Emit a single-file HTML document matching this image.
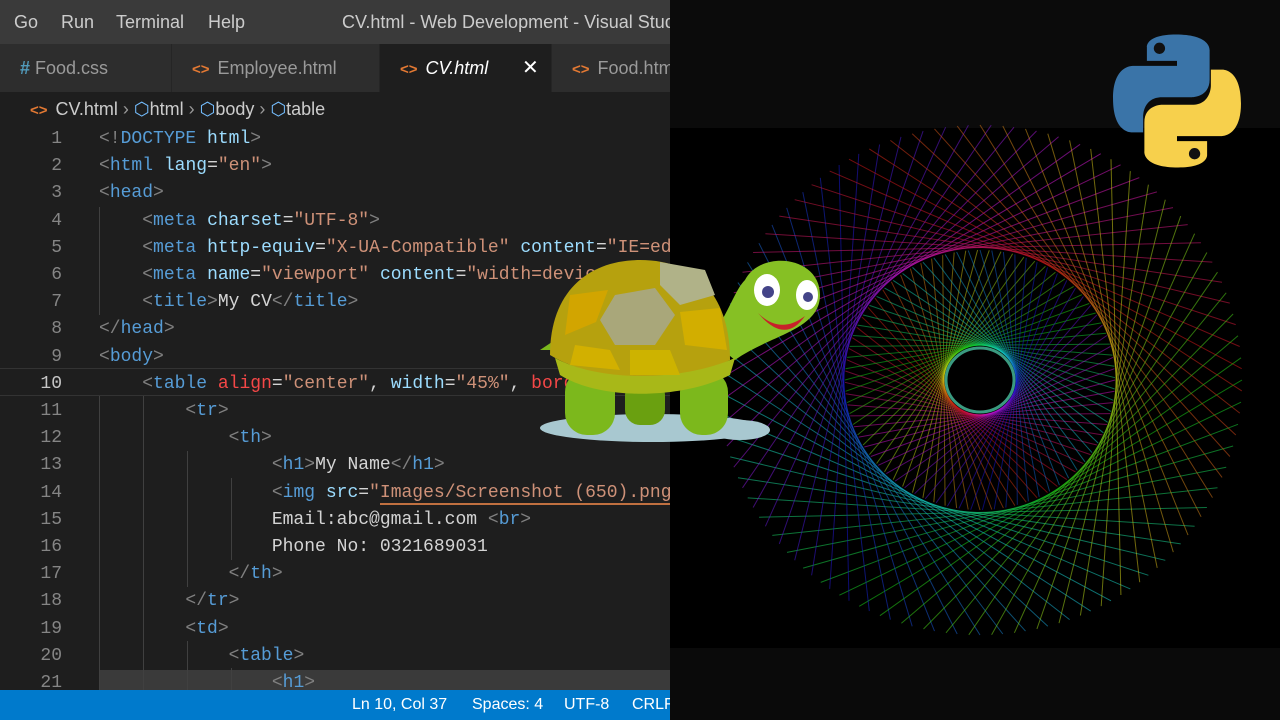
<!DOCTYPE html>
<html><head><meta charset="utf-8"><style>
*{margin:0;padding:0;box-sizing:border-box}
body{width:1280px;height:720px;overflow:hidden;background:#000;position:relative;font-family:"Liberation Sans",sans-serif}
#left{position:absolute;left:0;top:0;width:670px;height:720px;background:#1e1e1e;overflow:hidden}
#title{position:absolute;top:0;left:0;width:670px;height:44px;background:#3a3a3a;color:#ccc;font-size:18px;line-height:44px;white-space:nowrap}
#title span{position:absolute}
#tabs{position:absolute;top:44px;left:0;width:670px;height:48px;background:#2d2d2d;white-space:nowrap}
.tab{position:absolute;top:0;height:48px;line-height:48px;font-size:18px;color:#9a9a9a;padding-left:20px;border-right:1px solid #252525}
.ic{color:#e37933;font-weight:bold;font-size:15px;margin-right:8px}
#crumb{position:absolute;top:92px;left:0;width:670px;height:34px;line-height:34px;color:#ccc;font-size:18px;white-space:nowrap;padding-left:30px}
.cube{color:#75beff}
#code{position:absolute;top:126px;left:0;width:670px;font-family:"Liberation Mono",monospace;font-size:18px}
.ln{position:absolute;height:27.2px;line-height:27.2px;width:670px;white-space:pre}
.n{position:absolute;left:0;width:62px;text-align:right;color:#858585}
.c{position:absolute;left:99px;color:#d4d4d4}
.t{color:#569cd6}.g{color:#808080}.a{color:#9cdcfe}.s{color:#ce9178}.r{color:#f44747}
#status{position:absolute;left:0;top:690px;width:670px;height:30px;background:#007acc;color:#fff;font-size:16px;line-height:30px;white-space:nowrap}
#status span{position:absolute}
.guide{position:absolute;width:1px;background:#404040}
</style></head><body>
<div id="left">
<div id="title"><span style="left:14px">Go</span><span style="left:61px">Run</span><span style="left:116px">Terminal</span><span style="left:208px">Help</span><span style="left:342px">CV.html - Web Development - Visual Studio</span></div>
<div id="tabs">
<div class="tab" style="left:0;width:172px"><span style="color:#519aba;font-weight:bold">#</span> Food.css</div>
<div class="tab" style="left:172px;width:208px"><span class="ic">&lt;&gt;</span>Employee.html</div>
<div class="tab" style="left:380px;width:172px;background:#1e1e1e;color:#fff;font-style:italic"><span class="ic" style="font-style:normal">&lt;&gt;</span>CV.html<span style="position:absolute;left:142px;font-style:normal;font-size:20px">✕</span></div>
<div class="tab" style="left:552px;width:130px"><span class="ic">&lt;&gt;</span>Food.html</div>
</div>
<div id="crumb"><span class="ic">&lt;&gt;</span>CV.html <span style="color:#999">›</span> <span class="cube">⬡</span>html <span style="color:#999">›</span> <span class="cube">⬡</span>body <span style="color:#999">›</span> <span class="cube">⬡</span>table</div>
<div style="position:absolute;left:0;top:368px;width:670px;height:28px;border-top:1px solid #333;border-bottom:1px solid #333"></div>
<div style="position:absolute;left:99px;top:670px;width:571px;height:20px;background:#3a3a3a"></div>
<div class="guide" style="left:99px;top:207px;height:108px"></div>
<div class="guide" style="left:99px;top:396px;height:294px"></div>
<div class="guide" style="left:143px;top:396px;height:294px"></div>
<div class="guide" style="left:187px;top:451px;height:136px"></div>
<div class="guide" style="left:231px;top:478px;height:82px"></div>
<div class="guide" style="left:187px;top:641px;height:49px"></div>
<div class="guide" style="left:231px;top:668px;height:22px"></div>
<div id="code">
<div class="ln" style="top:0"><span class="n">1</span><span class="c"><span class="g">&lt;!</span><span class="t">DOCTYPE</span> <span class="a">html</span><span class="g">&gt;</span></span></div>
<div class="ln" style="top:27.2px"><span class="n">2</span><span class="c"><span class="g">&lt;</span><span class="t">html</span> <span class="a">lang</span>=<span class="s">"en"</span><span class="g">&gt;</span></span></div>
<div class="ln" style="top:54.4px"><span class="n">3</span><span class="c"><span class="g">&lt;</span><span class="t">head</span><span class="g">&gt;</span></span></div>
<div class="ln" style="top:81.6px"><span class="n">4</span><span class="c">    <span class="g">&lt;</span><span class="t">meta</span> <span class="a">charset</span>=<span class="s">"UTF-8"</span><span class="g">&gt;</span></span></div>
<div class="ln" style="top:108.8px"><span class="n">5</span><span class="c">    <span class="g">&lt;</span><span class="t">meta</span> <span class="a">http-equiv</span>=<span class="s">"X-UA-Compatible"</span> <span class="a">content</span>=<span class="s">"IE=edge"</span></span></div>
<div class="ln" style="top:136px"><span class="n">6</span><span class="c">    <span class="g">&lt;</span><span class="t">meta</span> <span class="a">name</span>=<span class="s">"viewport"</span> <span class="a">content</span>=<span class="s">"width=device-width"</span></span></div>
<div class="ln" style="top:163.2px"><span class="n">7</span><span class="c">    <span class="g">&lt;</span><span class="t">title</span><span class="g">&gt;</span>My CV<span class="g">&lt;/</span><span class="t">title</span><span class="g">&gt;</span></span></div>
<div class="ln" style="top:190.4px"><span class="n">8</span><span class="c"><span class="g">&lt;/</span><span class="t">head</span><span class="g">&gt;</span></span></div>
<div class="ln" style="top:217.6px"><span class="n">9</span><span class="c"><span class="g">&lt;</span><span class="t">body</span><span class="g">&gt;</span></span></div>
<div class="ln" style="top:244.8px"><span class="n" style="color:#c6c6c6">10</span><span class="c">    <span class="g">&lt;</span><span class="t">table</span> <span class="r">align</span>=<span class="s">"center"</span>, <span class="a">width</span>=<span class="s">"45%"</span>, <span class="r">border</span></span></div>
<div class="ln" style="top:272px"><span class="n">11</span><span class="c">        <span class="g">&lt;</span><span class="t">tr</span><span class="g">&gt;</span></span></div>
<div class="ln" style="top:299.2px"><span class="n">12</span><span class="c">            <span class="g">&lt;</span><span class="t">th</span><span class="g">&gt;</span></span></div>
<div class="ln" style="top:326.4px"><span class="n">13</span><span class="c">                <span class="g">&lt;</span><span class="t">h1</span><span class="g">&gt;</span>My Name<span class="g">&lt;/</span><span class="t">h1</span><span class="g">&gt;</span></span></div>
<div class="ln" style="top:353.6px"><span class="n">14</span><span class="c">                <span class="g">&lt;</span><span class="t">img</span> <span class="a">src</span>=<span class="s">"<span style="border-bottom:2px solid #c07040">Images/Screenshot (650).png</span></span></span></div>
<div class="ln" style="top:380.8px"><span class="n">15</span><span class="c">                Email:abc@gmail.com <span class="g">&lt;</span><span class="t">br</span><span class="g">&gt;</span></span></div>
<div class="ln" style="top:408px"><span class="n">16</span><span class="c">                Phone No: 0321689031</span></div>
<div class="ln" style="top:435.2px"><span class="n">17</span><span class="c">            <span class="g">&lt;/</span><span class="t">th</span><span class="g">&gt;</span></span></div>
<div class="ln" style="top:462.4px"><span class="n">18</span><span class="c">        <span class="g">&lt;/</span><span class="t">tr</span><span class="g">&gt;</span></span></div>
<div class="ln" style="top:489.6px"><span class="n">19</span><span class="c">        <span class="g">&lt;</span><span class="t">td</span><span class="g">&gt;</span></span></div>
<div class="ln" style="top:516.8px"><span class="n">20</span><span class="c">            <span class="g">&lt;</span><span class="t">table</span><span class="g">&gt;</span></span></div>
<div class="ln" style="top:544px"><span class="n">21</span><span class="c">                <span class="g">&lt;</span><span class="t">h1</span><span class="g">&gt;</span></span></div>
</div>
<div id="status"><span style="left:352px">Ln 10, Col 37</span><span style="left:472px">Spaces: 4</span><span style="left:564px">UTF-8</span><span style="left:632px">CRLF</span></div>
</div>
<div style="position:absolute;left:670px;top:0;width:610px;height:128px;background:#0b0b0b"></div>
<div style="position:absolute;left:670px;top:648px;width:610px;height:72px;background:#0a0a0a"></div>
<svg id="spiro" style="position:absolute;left:670px;top:0" width="610" height="720"></svg>
<svg style="position:absolute;left:1108px;top:32px" width="138" height="138" viewBox="0 0 110 110">
<path d="M54 2C30 2 31 12 31 12v11h24v4H21S4 25 4 53s15 27 15 27h9V67s0-15 15-15h24s14 0 14-14V15S83 2 54 2z" fill="#3a74a8"/>
<circle cx="41" cy="13" r="4.5" fill="#111"/>
<path d="M56 108c24 0 23-10 23-10V87H55v-4h34s17 2 17-26-15-27-15-27h-9v13s0 15-15 15H43s-14 0-14 14v23s-2 13 27 13z" fill="#f7d04c"/>
<circle cx="69" cy="97" r="4.5" fill="#111"/>
</svg>
<svg style="position:absolute;left:530px;top:250px" width="300" height="200" viewBox="0 0 300 200">
<ellipse cx="122" cy="178" rx="112" ry="14" fill="#a8c8d0"/>
<ellipse cx="210" cy="180" rx="30" ry="10" fill="#a8c8d0"/>
<path d="M45 100 L10 100 L40 80Z" fill="#7cb81c"/>
<rect x="35" y="120" width="50" height="65" rx="22" fill="#7cb81c"/>
<rect x="150" y="120" width="48" height="65" rx="22" fill="#7cb81c"/>
<rect x="95" y="130" width="40" height="45" rx="15" fill="#6aa010"/>
<path d="M180 90 C200 60 205 40 215 30 C230 0 290 5 290 45 C290 80 240 85 205 110Z" fill="#86c024"/>
<ellipse cx="237" cy="40" rx="13" ry="16" fill="#fff"/><circle cx="238" cy="42" r="6" fill="#448"/>
<ellipse cx="277" cy="45" rx="11" ry="15" fill="#fff"/><circle cx="278" cy="47" r="5" fill="#448"/>
<path d="M228 63 Q250 85 275 66 Q255 95 228 63Z" fill="#c8202a"/>
<path d="M20 105 C20 40 60 10 110 10 C170 10 200 50 200 110 C150 135 70 135 20 105Z" fill="#b6a10e"/>
<path d="M25 108 C70 132 150 132 205 108 L200 125 C150 150 70 150 30 125Z" fill="#a8b818"/>
<path d="M85 45 L125 38 L145 65 L125 95 L85 95 L70 70Z" fill="#a9a77a"/>
<path d="M130 12 L175 20 L185 45 L150 55 L130 35Z" fill="#b0b288"/>
<path d="M40 45 L78 40 L66 72 L35 85Z" fill="#d2a500"/>
<path d="M150 62 L190 58 L197 100 L155 95Z" fill="#d2ae00"/>
<path d="M45 95 L80 100 L90 120 L40 115Z" fill="#d2b000"/>
<path d="M100 100 L140 100 L150 125 L100 125Z" fill="#cdb300"/>
</svg>
<script>
var s=document.getElementById('spiro'),h='';var cx=310,cy=380;
function L(x1,y1,x2,y2,c,o){h+='<line x1="'+x1.toFixed(1)+'" y1="'+y1.toFixed(1)+'" x2="'+x2.toFixed(1)+'" y2="'+y2.toFixed(1)+'" stroke="'+c+'" stroke-opacity="'+o+'" stroke-width="1"/>';}
var N=72;
for(var i=0;i<N;i++){var a=i/N*2*Math.PI,b=a+2.05;var hue=(i/N*360+120)%360;var c='hsl('+hue+',80%,45%)';
L(cx+262*Math.cos(a),cy+255*Math.sin(a),cx+262*Math.cos(b),cy+255*Math.sin(b),c,0.55);
var d=a+2.6;var c2='hsl('+((hue+180)%360)+',85%,45%)';
L(cx+135*Math.cos(a),cy+130*Math.sin(a),cx+135*Math.cos(d),cy+130*Math.sin(d),c2,0.5);}
h+='<ellipse cx="'+cx+'" cy="'+cy+'" rx="34" ry="32" fill="#000" stroke="#3a9a80" stroke-width="3"/>';
s.innerHTML=h;
</script>
</body></html>
